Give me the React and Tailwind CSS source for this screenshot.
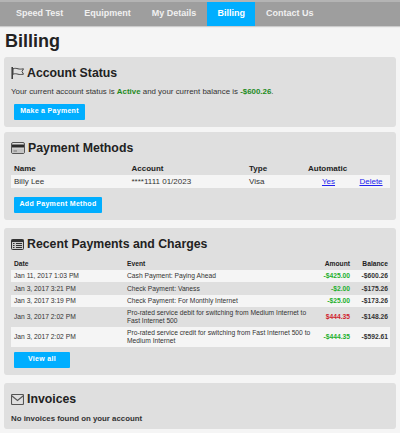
import React from "react";

const tabs = ["Speed Test", "Equipment", "My Details", "Billing", "Contact Us"];

const charges = [
  { date: "Jan 11, 2017 1:03 PM", event: "Cash Payment: Paying Ahead", amount: "-$425.00", balance: "-$600.26" },
  { date: "Jan 3, 2017 3:21 PM", event: "Check Payment: Vaness", amount: "-$2.00", balance: "-$175.26" },
  { date: "Jan 3, 2017 3:19 PM", event: "Check Payment: For Monthly Internet", amount: "-$25.00", balance: "-$173.26" },
  { date: "Jan 3, 2017 2:02 PM", event: "Pro-rated service debit for switching from Medium Internet to Fast Internet 500", amount: "$444.35", balance: "-$148.26", debit: true },
  { date: "Jan 3, 2017 2:02 PM", event: "Pro-rated service credit for switching from Fast Internet 500 to Medium Internet", amount: "-$444.35", balance: "-$592.61" },
];

const FlagIcon = () => (
  <svg width="13" height="12" viewBox="0 0 13 12" fill="none" stroke="#444" strokeWidth="1">
    <path d="M1.2 0v12" stroke="#333" strokeWidth="1.5" />
    <path d="M2 1.8c2-.8 3.5-.4 5 0s3 .4 5.5 0l-1.5 2.7 1.5 2.7c-2.500 .4-4 .4-5.500 0s-3-.8-5 0z" />
  </svg>
);

const CardIcon = () => (
  <svg width="14" height="12" viewBox="0 0 14 12">
    <rect x="0.500" y="0.500" width="13" height="11" rx="1.500" fill="#dcdcdc" stroke="#555" />
    <rect x="1" y="2.500" width="12" height="3" fill="#2a2a2a" />
    <rect x="1" y="6.500" width="12" height="4.500" fill="#c4c4c4" />
    <rect x="2.500" y="8.500" width="3.500" height="1" fill="#777" />
  </svg>
);

const ListIcon = () => (
  <svg width="13" height="11" viewBox="0 0 13 11">
    <rect x="0.500" y="0.500" width="12" height="10" rx="1" fill="#ccc" stroke="#333" />
    <rect x="0.500" y="0.500" width="12" height="2.500" fill="#333" />
    <path d="M2 4.500h1.500M2 6.500h1.500M2 8.500h1.500M5 4.500h6M5 6.500h6M5 8.500h6" stroke="#333" strokeWidth="1" />
  </svg>
);

const MailIcon = () => (
  <svg width="13" height="11" viewBox="0 0 13 11" fill="none" stroke="#555" strokeWidth="1.100">
    <rect x="0.500" y="0.500" width="12" height="10" rx="1" />
    <path d="M1 2l5.500 4.500L12 2" />
  </svg>
);

const Panel = ({ icon, title, children, className }) => (
  <div className={`mx-1 rounded-[3px] bg-[#dfdfdf] px-[7px] ${className}`}>
    <h2 className="flex items-center gap-[3px] text-[12.3px] leading-4 font-bold text-[#222]">
      {icon}
      {title}
    </h2>
    {children}
  </div>
);

const Button = ({ children, className }) => (
  <button className={`ml-[3px] block h-4 rounded-[1px] bg-[#00aeff] pb-[1px] text-[7px] font-bold tracking-[0.3px] text-white ${className}`}>
    {children}
  </button>
);

export default function App() {
  return (
    <div className="h-[433px] overflow-hidden bg-[#f5f5f5] font-['Liberation_Sans',Arial,sans-serif] text-[#333]">
      <div className="flex h-[26px] border-t-2 border-[#b4b4b4] bg-[#9e9e9e] pl-[5.5px] shadow-[0_1px_1px_#ccc]">
        {tabs.map((tab) => (
          <div
            key={tab}
            className={`flex items-center px-[10.5px] text-[9px] font-bold ${tab === "Billing" ? "bg-[#00aeff] text-white" : "text-[#f0f0f0]"}`}
          >
            {tab}
          </div>
        ))}
      </div>

      <h1 className="mt-[5px] ml-[5px] text-[18px] leading-[21px] font-bold text-[#222]">Billing</h1>

      <Panel icon={<FlagIcon />} title="Account Status" className="mt-[5px] h-[70px] pt-2">
        <p className="mt-[5px] text-[7.9px] leading-[11px]">
          Your current account status is <b className="text-[#1c8a1c]">Active</b> and your current balance is{" "}
          <b className="text-[#1c8a1c]">-$600.26</b>.
        </p>
        <Button className="mt-[7px] w-[71px]">Make a Payment</Button>
      </Panel>

      <Panel icon={<CardIcon />} title="Payment Methods" className="mt-[5px] h-[88px] pt-2">
        <table className="mt-[6px] w-[379px] table-fixed text-[8px] leading-[13px]">
          <thead>
            <tr className="font-bold text-[#222]">
              <td className="w-[117.5px] pl-[3px]">Name</td>
              <td className="w-[117.5px] pl-[3px]">Account</td>
              <td className="w-[59px] pl-[3px]">Type</td>
              <td className="w-[47px] pl-[3px]">Automatic</td>
              <td />
            </tr>
          </thead>
          <tbody>
            <tr className="bg-[#f5f5f5]">
              <td className="pl-[3px]">Billy Lee</td>
              <td className="pl-[3px]">****1111 01/2023</td>
              <td className="pl-[3px]">Visa</td>
              <td className="text-center text-[#2222ee] underline">Yes</td>
              <td className="text-center text-[#2222ee] underline">Delete</td>
            </tr>
          </tbody>
        </table>
        <Button className="mt-[9px] w-[88px]">Add Payment Method</Button>
      </Panel>

      <Panel icon={<ListIcon />} title="Recent Payments and Charges" className="mt-2 h-[147px] pt-2">
        <table className="mt-[5px] w-[379px] table-fixed text-[6.7px] leading-[8px]">
          <thead>
            <tr className="h-[13px] font-bold text-[#222]">
              <td className="w-[113px] pl-[3px]">Date</td>
              <td className="w-[190px] pl-[3px]">Event</td>
              <td className="w-[39px] pr-[3px] text-right">Amount</td>
              <td className="pr-[2px] text-right">Balance</td>
            </tr>
          </thead>
          <tbody>
            {charges.map((row, i) => (
              <tr key={i} className={`${i % 2 === 0 ? "bg-[#f5f5f5]" : ""} ${row.event.length > 50 ? "h-5" : "h-[12.4px]"}`}>
                <td className="pl-[3px]">{row.date}</td>
                <td className="pl-[3px]">{row.event}</td>
                <td className={`pr-[3px] text-right font-bold ${row.debit ? "text-[#d01c2c]" : "text-[#22b02c]"}`}>{row.amount}</td>
                <td className="pr-[2px] text-right font-bold">{row.balance}</td>
              </tr>
            ))}
          </tbody>
        </table>
        <Button className="mt-[5px] w-14">View all</Button>
      </Panel>

      <Panel icon={<MailIcon />} title="Invoices" className="mt-2 h-[46px] pt-2">
        <p className="mt-[6px] text-[7.85px] leading-[11px] font-bold">No invoices found on your account</p>
      </Panel>
    </div>
  );
}
